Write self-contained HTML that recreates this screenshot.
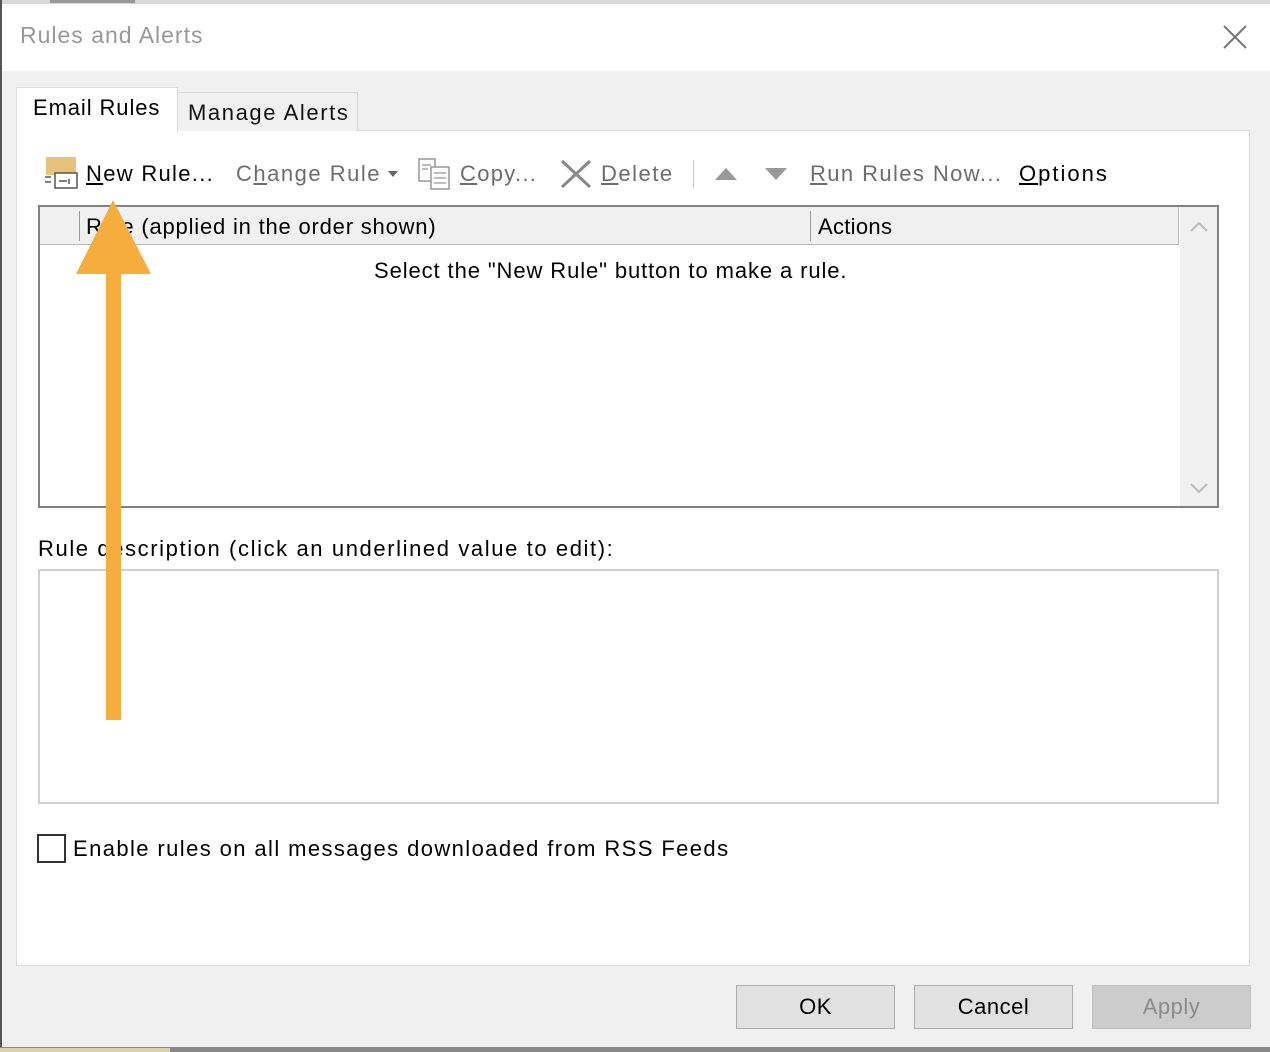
<!DOCTYPE html>
<html><head><style>
*{margin:0;padding:0;box-sizing:border-box}
body{width:1270px;height:1052px;overflow:hidden;background:#f0f0f0;font-family:"Liberation Sans","DejaVu Sans",sans-serif;position:relative;color:#000}
.a{position:absolute;white-space:nowrap}
.t{font-size:22px;letter-spacing:1.4px}
.g{color:#6d6d6d}
u{text-decoration:underline}
.btn{position:absolute;top:985px;height:44px;width:159px;border:1px solid #adadad;background:#e1e1e1;font-size:22px;text-align:center;line-height:42px;letter-spacing:0.5px}
</style></head><body>
<div class="a" style="left:0;top:0;width:1270px;height:4px;background:#d8d8d8"></div>
<div class="a" style="left:50px;top:0;width:85px;height:3px;background:#999"></div>
<div class="a" style="left:0;top:0;width:2px;height:1052px;background:#555"></div>
<div class="a" style="left:2px;top:4px;width:1268px;height:67px;background:#fff"></div>
<div class="a t" style="left:20px;top:22px;color:#999;font-size:23px;letter-spacing:1px">Rules and Alerts</div>
<svg class="a" style="left:1222px;top:24px" width="26" height="26"><path d="M2 2L24 24M24 2L2 24" stroke="#777" stroke-width="2"/></svg>
<div class="a" style="left:16px;top:130px;width:1234px;height:836px;background:#fff;border:1px solid #dcdcdc"></div>
<div class="a" style="left:177px;top:92px;width:181px;height:39px;background:#f0f0f0;border:1px solid #d9d9d9;border-bottom:none"></div>
<div class="a t" style="left:188px;top:100px;color:#111;letter-spacing:1.6px">Manage Alerts</div>
<div class="a" style="left:16px;top:87px;width:162px;height:46px;background:#fff;border:1px solid #dcdcdc;border-bottom:none"></div>
<div class="a t" style="left:33px;top:95px;letter-spacing:0.9px">Email Rules</div>
<svg class="a" style="left:43px;top:155px" width="36" height="36"><rect x="3" y="2" width="30" height="18" fill="#e8c27a"/><rect x="12" y="18" width="22" height="15" fill="#fff" stroke="#555" stroke-width="1.5"/><path d="M2 22h6M2 27h6M16 26h8M26 24v5" stroke="#555" stroke-width="1.5"/></svg>
<div class="a t" style="left:86px;top:161px;letter-spacing:1.3px"><u>N</u>ew Rule...</div>
<div class="a t g" style="left:236px;top:161px;letter-spacing:1.5px">C<u>h</u>ange Rule</div>
<svg class="a" style="left:388px;top:171px" width="12" height="8"><path d="M0 0h10l-5 6z" fill="#666"/></svg>
<svg class="a" style="left:417px;top:157px" width="36" height="34"><rect x="2" y="2" width="16" height="22" fill="#fff" stroke="#999" stroke-width="1.5"/><rect x="14" y="10" width="18" height="22" fill="#fff" stroke="#999" stroke-width="1.5"/><path d="M5 8h9M5 12h6M17 16h12M17 21h12M17 26h12" stroke="#999" stroke-width="1.3"/></svg>
<div class="a t g" style="left:460px;top:161px;letter-spacing:1.3px"><u>C</u>opy...</div>
<svg class="a" style="left:559px;top:159px" width="34" height="30"><path d="M3 2L31 28M31 2L3 28" stroke="#888" stroke-width="3"/></svg>
<div class="a t g" style="left:601px;top:161px;letter-spacing:1.5px"><u>D</u>elete</div>
<div class="a" style="left:693px;top:160px;width:1px;height:28px;background:#ccc"></div>
<svg class="a" style="left:714px;top:167px" width="24" height="14"><path d="M1 13h22L12 1z" fill="#999"/></svg>
<svg class="a" style="left:764px;top:167px" width="24" height="14"><path d="M1 1h22L12 13z" fill="#999"/></svg>
<div class="a t g" style="left:810px;top:161px;letter-spacing:1.4px"><u>R</u>un Rules Now...</div>
<div class="a t" style="left:1019px;top:161px;letter-spacing:2px"><u>O</u>ptions</div>
<div class="a" style="left:38px;top:205px;width:1181px;height:303px;border:2px solid #828282;background:#fff"></div>
<div class="a" style="left:40px;top:207px;width:1139px;height:38px;background:#f0f0f0;border-bottom:1px solid #bbb;border-right:1px solid #bbb"></div>
<div class="a" style="left:79px;top:211px;width:1px;height:30px;background:#999"></div>
<div class="a" style="left:810px;top:211px;width:1px;height:30px;background:#999"></div>
<div class="a t" style="left:86px;top:214px;letter-spacing:0.8px">Rule (applied in the order shown)</div>
<div class="a t" style="left:818px;top:214px;letter-spacing:0.3px">Actions</div>
<div class="a" style="left:1180px;top:207px;width:37px;height:299px;background:#f0f0f0"></div>
<svg class="a" style="left:1190px;top:221px" width="18" height="12"><path d="M1 10L9 2l8 8" stroke="#bbb" stroke-width="2" fill="none"/></svg>
<svg class="a" style="left:1190px;top:482px" width="18" height="12"><path d="M1 2l8 8 8-8" stroke="#bbb" stroke-width="2" fill="none"/></svg>
<div class="a t" style="left:374px;top:258px;letter-spacing:0.9px">Select the "New Rule" button to make a rule.</div>
<div class="a t" style="left:38px;top:536px;letter-spacing:1.6px">Rule description (click an underlined value to edit):</div>
<div class="a" style="left:38px;top:569px;width:1181px;height:235px;border:2px solid #d0d0d0;background:#fff"></div>
<div class="a" style="left:37px;top:834px;width:29px;height:29px;border:2px solid #333;background:#fff"></div>
<div class="a t" style="left:73px;top:836px;letter-spacing:1.4px">Enable rules on all messages downloaded from RSS Feeds</div>
<svg class="a" style="left:0;top:0" width="200" height="730"><rect x="106" y="268" width="15" height="452" fill="#f5ae3d"/><path d="M113 200L151 274H76z" fill="#f5ae3d"/></svg>
<div class="btn" style="left:736px">OK</div>
<div class="btn" style="left:914px">Cancel</div>
<div class="btn" style="left:1092px;background:#cccccc;border-color:#bfbfbf;color:#8a8a8a">Apply</div>
<div class="a" style="left:0;top:1047px;width:1270px;height:5px;background:#888"></div>
<div class="a" style="left:0;top:1048px;width:170px;height:4px;background:#d8d3a8"></div>
</body></html>
